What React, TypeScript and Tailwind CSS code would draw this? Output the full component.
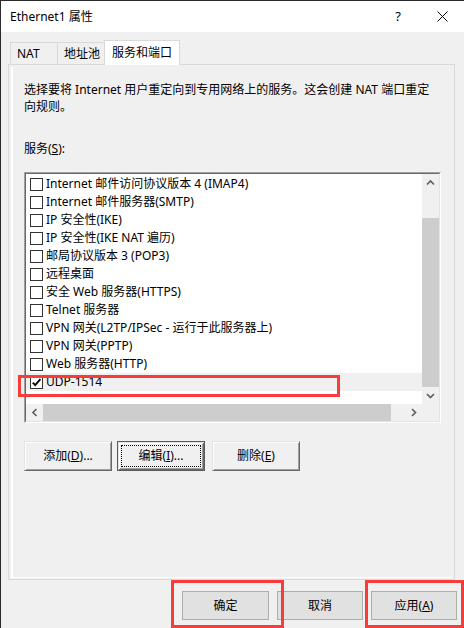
import React from "react";

const items = [
  "Internet 邮件访问协议版本 4 (IMAP4)",
  "Internet 邮件服务器(SMTP)",
  "IP 安全性(IKE)",
  "IP 安全性(IKE NAT 遍历)",
  "邮局协议版本 3 (POP3)",
  "远程桌面",
  "安全 Web 服务器(HTTPS)",
  "Telnet 服务器",
  "VPN 网关(L2TP/IPSec - 运行于此服务器上)",
  "VPN 网关(PPTP)",
  "Web 服务器(HTTP)",
  "UDP-1514",
];

function Chevron({ dir }: { dir: "up" | "down" | "left" | "right" }) {
  const d =
    dir === "up"
      ? "M1 5.5 L4.5 2 L8 5.5"
      : dir === "down"
      ? "M1 2 L4.5 5.5 L8 2"
      : dir === "left"
      ? "M5.5 1 L2 4.5 L5.5 8"
      : "M2 1 L5.5 4.5 L2 8";
  const w = dir === "up" || dir === "down" ? 9 : 7;
  const h = dir === "up" || dir === "down" ? 7 : 9;
  return (
    <svg width={w} height={h} viewBox={`0 0 ${w} ${h}`}>
      <path d={d} stroke="#606060" strokeWidth="1.7" fill="none" />
    </svg>
  );
}

function ClassicButton({ children, def }: { children: React.ReactNode; def?: boolean }) {
  if (def) {
    return (
      <div className="h-[30px] w-[88px] flex items-center justify-center bg-[#f0f0f0] border border-[#5a5a5a] shadow-[inset_1px_1px_0_#e3e3e3,inset_-1px_-1px_0_#696969,inset_2px_2px_0_#ffffff,inset_-2px_-2px_0_#a0a0a0] outline-1 outline-dotted outline-black outline-offset-[-5px]">
        {children}
      </div>
    );
  }
  return (
    <div className="h-[30px] w-[88px] flex items-center justify-center bg-[#f0f0f0] border border-t-[#e3e3e3] border-l-[#e3e3e3] border-r-[#696969] border-b-[#696969] shadow-[inset_1px_1px_0_#ffffff,inset_-1px_-1px_0_#a0a0a0]">
      {children}
    </div>
  );
}

export default function App() {
  return (
    <div className="relative w-[464px] h-[628px] overflow-hidden bg-[#f0f0f0] border-l border-t border-[#2b2b2b] text-[12px] text-black font-['Noto_Sans','Noto_Sans_CJK_SC',sans-serif]">
      {/* Title bar */}
      <div className="h-[31px] bg-white flex items-center pl-[9px]">
        <span className="whitespace-nowrap">Ethernet1 属性</span>
        <div className="ml-auto flex h-full">
          <div className="w-[44px] flex items-center justify-center text-[13px]">?</div>
          <div className="w-[44px] flex items-center justify-center">
            <svg width="11" height="11" viewBox="0 0 11 11">
              <path d="M0.5 0.5 L10.5 10.5 M10.5 0.5 L0.5 10.5" stroke="#000" strokeWidth="1" />
            </svg>
          </div>
        </div>
      </div>

      {/* Tabs */}
      <div className="relative z-10 mt-[8px] flex items-end h-[25px] pl-[9px]">
        <div className="h-[22px] mb-px w-[48px] border border-b-0 border-[#d9d9d9] flex items-center pl-[6px]">NAT</div>
        <div className="h-[22px] mb-px w-[47px] border border-l-0 border-b-0 border-[#d9d9d9] flex items-center pl-[6px]">地址池</div>
        <div className="h-[25px] w-[76px] -ml-px border border-b-0 border-[#d9d9d9] bg-white flex items-center pl-[7px] whitespace-nowrap">服务和端口</div>
      </div>

      {/* Panel */}
      <div className="-mt-px ml-[7px] w-[447px] h-[516px] border border-[#d9d9d9] p-[2px] pb-[1px]">
        <div className="h-full border-l-2 border-b border-white pl-[11px] pt-[14px]">
          <div className="leading-[17px]">
            <div className="whitespace-nowrap">选择要将 Internet 用户重定向到专用网络上的服务。这会创建 NAT 端口重定</div>
            <div>向规则。</div>
          </div>
          <div className="mt-[25px] leading-[17px]">
            服务(<span className="underline">S</span>):
          </div>

          {/* List box */}
          <div className="mt-[15px] w-[417px] h-[251px] border border-t-[#a0a0a0] border-l-[#a0a0a0] border-r-white border-b-white">
            <div className="h-full bg-white border border-t-[#696969] border-l-[#696969] border-r-[#e3e3e3] border-b-[#e3e3e3] grid grid-cols-[1fr_17px] grid-rows-[1fr_17px]">
              <div className="overflow-hidden pt-px">
                {items.map((t, i) => {
                  const sel = i === items.length - 1;
                  return (
                    <div
                      key={t}
                      className={sel ? "flex h-[18px] items-center pl-[4px] bg-[#f0f0f0]" : "flex h-[18px] items-center pl-[4px]"}
                    >
                      <span className="w-[13px] h-[13px] border border-[#333333] bg-white flex items-center justify-center shrink-0">
                        {sel && (
                          <svg width="11" height="11" viewBox="0 0 11 11">
                            <path d="M1.8 5.6 L4.2 8.2 L9.4 2.2" stroke="#000" strokeWidth="1.9" fill="none" />
                          </svg>
                        )}
                      </span>
                      <span className="ml-[3px] whitespace-nowrap leading-[18px]">{t}</span>
                    </div>
                  );
                })}
              </div>
              {/* vertical scrollbar */}
              <div className="bg-[#f0f0f0] flex flex-col">
                <div className="h-[17px] flex items-center justify-center">
                  <Chevron dir="up" />
                </div>
                <div className="h-[27px]" />
                <div className="h-[169px] bg-[#cdcdcd]" />
                <div className="flex-1" />
                <div className="h-[17px] flex items-center justify-center">
                  <Chevron dir="down" />
                </div>
              </div>
              {/* horizontal scrollbar */}
              <div className="bg-[#f0f0f0] flex">
                <div className="w-[17px] flex items-center justify-center">
                  <Chevron dir="left" />
                </div>
                <div className="w-[348px] bg-[#cdcdcd]" />
                <div className="flex-1" />
                <div className="w-[17px] flex items-center justify-center">
                  <Chevron dir="right" />
                </div>
              </div>
              <div className="bg-[#f0f0f0]" />
            </div>
          </div>

          {/* Action buttons */}
          <div className="mt-[18px] flex">
            <ClassicButton>
              添加(<span className="underline">D</span>)...
            </ClassicButton>
            <div className="ml-[5px]">
              <ClassicButton def>
                编辑(<span className="underline">I</span>)...
              </ClassicButton>
            </div>
            <div className="ml-[7px]">
              <ClassicButton>
                删除(<span className="underline">E</span>)
              </ClassicButton>
            </div>
          </div>
        </div>
      </div>

      {/* Dialog buttons */}
      <div className="mt-[11px] flex justify-end pr-[7px]">
        <div className="h-[29px] w-[87px] border border-[#adadad] bg-[#e1e1e1] flex items-center justify-center">确定</div>
        <div className="ml-[8px] h-[29px] w-[86px] border border-[#adadad] bg-[#e1e1e1] flex items-center justify-center">取消</div>
        <div className="ml-[8px] h-[29px] w-[86px] border border-[#adadad] bg-[#e1e1e1] flex items-center justify-center">
          应用(<span className="underline">A</span>)
        </div>
      </div>

      {/* Red annotation overlays */}
      <div className="absolute left-[17px] top-[374px] w-[322px] h-[22px] border-[3px] border-[#f83c3c]" />
      <div className="absolute left-[170px] top-[579px] w-[113px] h-[48px] border-[3px] border-[#f83c3c]" />
      <div className="absolute left-[364px] top-[579px] w-[99px] h-[48px] border-[3px] border-[#f83c3c]" />
    </div>
  );
}
